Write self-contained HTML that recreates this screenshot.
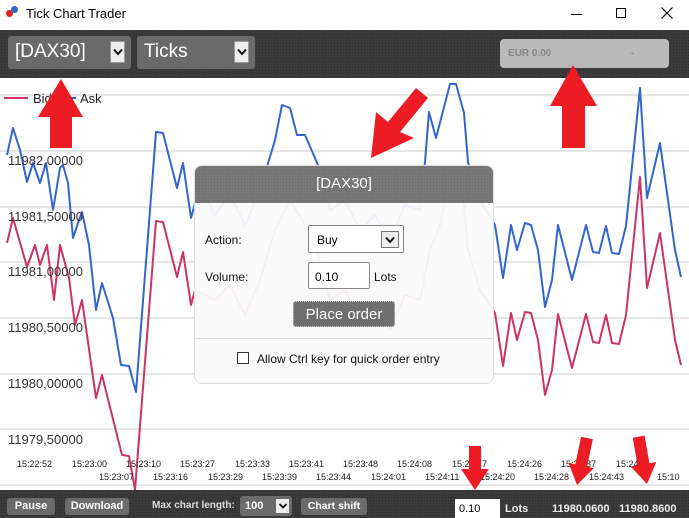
<!DOCTYPE html>
<html><head><meta charset="utf-8"><style>
*{margin:0;padding:0;box-sizing:border-box}
body{width:689px;height:518px;overflow:hidden;background:#fff;font-family:"Liberation Sans",sans-serif;position:relative}
.abs{position:absolute}
.dark{background:#3a3a3a;background-image:radial-gradient(#2c2c2c 35%,transparent 36%);background-size:3px 3px}
.sel{position:absolute;top:36px;height:33px;background:#6a6a6a;border-radius:3px;color:#fff;font-size:19px;padding:5px 7px}
.dd{position:absolute;top:5px;right:6px;width:15px;height:22px;background:#eee;border:1px solid #999}
.dd svg,.ddm svg{position:absolute;left:50%;top:50%;transform:translate(-50%,-50%)}
.btn{position:absolute;top:498px;height:17px;background:#6b6b6b;border-radius:3px;color:#fff;font-size:11px;font-weight:bold;padding:2px 0;text-align:center;white-space:nowrap}
.yl{position:absolute;left:8px;font-size:13px;color:#333}
.t{position:absolute;font-size:9px;color:#222}
</style></head><body>
<div class="abs" style="left:6px;top:10px;width:7px;height:7px;border-radius:50%;background:#d22"></div>
<div class="abs" style="left:11px;top:6px;width:7px;height:7px;border-radius:50%;background:#36c"></div>
<div class="abs" style="left:26px;top:6px;font-size:13px;color:#000">Tick Chart Trader</div>
<div class="abs" style="left:571px;top:14px;width:11px;height:1px;background:#000"></div>
<div class="abs" style="left:616px;top:8px;width:10px;height:10px;border:1px solid #000"></div>
<svg class="abs" style="left:661px;top:7px" width="12" height="12"><path d="M0.5 0.5L11.5 11.5M11.5 0.5L0.5 11.5" stroke="#000" stroke-width="1.2"/></svg>
<div class="abs dark" style="left:0;top:30px;width:689px;height:48px"></div>
<div class="sel" style="left:8px;width:123px">[DAX30]<div class="dd"><svg width="10" height="7"><path d="M1 1L5 5.5L9 1" fill="none" stroke="#111" stroke-width="2"/></svg></div></div>
<div class="sel" style="left:137px;width:118px">Ticks<div class="dd"><svg width="10" height="7"><path d="M1 1L5 5.5L9 1" fill="none" stroke="#111" stroke-width="2"/></svg></div></div>
<div class="abs" style="left:500px;top:39px;width:169px;height:29px;background:#b9b9b9;border-radius:4px;color:#888;font-size:10px;font-weight:bold;padding:9px 8px">EUR 0.00<span style="position:absolute;left:131px">-</span></div>
<svg class="abs" style="left:0;top:78px" width="689" height="412">
<g stroke="#ccc" stroke-width="1">
<line x1="0" y1="17" x2="689" y2="17"/><line x1="0" y1="73" x2="689" y2="73"/><line x1="0" y1="129" x2="689" y2="129"/><line x1="0" y1="184" x2="689" y2="184"/><line x1="0" y1="240" x2="689" y2="240"/><line x1="0" y1="296" x2="689" y2="296"/><line x1="0" y1="351" x2="689" y2="351"/><line x1="0" y1="407" x2="689" y2="407"/>
</g>
<g transform="translate(0,-78)" fill="none" stroke-width="2" stroke-linejoin="round">
<polyline stroke="#3366cc" points="7,155 13,128 20,150 27,182 33,163 40,183 46,163 53,210 60,168 63,165 68,183 73,238 79,220 82,212 89,245 96,310 102,283 113,318 121,365 129,366 136,392 156,132 163,133 177,188 183,163 191,218 200,185 215,215 230,195 245,225 260,190 275,140 282,105 290,108 297,135 305,135 318,165 330,210 345,200 360,230 375,215 390,240 405,205 420,210 425,162 429,112 436,138 450,84 456,84 464,113 468,162 480,200 495,225 503,278 511,225 517,250 525,223 531,225 538,250 545,307 552,280 558,225 572,280 586,225 593,252 599,253 606,226 612,253 619,254 626,226 640,88 647,198 660,143 675,250 681,277"/>
<polyline stroke="#cc3366" points="7,243 13,218 27,267 35,245 40,265 47,245 54,300 60,245 69,278 75,325 82,300 96,398 102,375 122,455 129,456 135,490 156,221 163,222 177,277 183,252 191,305 195,290 215,300 230,285 245,315 260,280 275,230 290,200 305,225 318,255 330,300 345,290 360,320 375,305 390,330 405,295 420,300 430,250 440,225 450,175 456,175 464,205 468,250 480,290 495,313 503,366 511,313 517,340 525,312 531,313 538,340 545,395 552,370 558,314 572,368 586,314 593,342 599,343 606,315 612,343 619,344 626,315 640,177 647,288 660,233 675,340 681,365"/>
</g>
<line x1="4" y1="20" x2="28" y2="20" stroke="#cc3366" stroke-width="2"/>
<line x1="54" y1="20" x2="76" y2="20" stroke="#3366cc" stroke-width="2"/>
<text x="33" y="25" font-size="13" fill="#222" font-family="Liberation Sans">Bid</text>
<text x="80" y="25" font-size="13" fill="#222" font-family="Liberation Sans">Ask</text>
</svg>
<div class="yl" style="top:153px">11982,00000</div>
<div class="yl" style="top:209px">11981,50000</div>
<div class="yl" style="top:264px">11981,00000</div>
<div class="yl" style="top:320px">11980,50000</div>
<div class="yl" style="top:376px">11980,00000</div>
<div class="yl" style="top:432px">11979,50000</div>
<div class="t" style="left:17px;top:459px">15:22:52</div>
<div class="t" style="left:72px;top:459px">15:23:00</div>
<div class="t" style="left:126px;top:459px">15:23:10</div>
<div class="t" style="left:180px;top:459px">15:23:27</div>
<div class="t" style="left:235px;top:459px">15:23:33</div>
<div class="t" style="left:289px;top:459px">15:23:41</div>
<div class="t" style="left:343px;top:459px">15:23:48</div>
<div class="t" style="left:397px;top:459px">15:24:08</div>
<div class="t" style="left:452px;top:459px">15:24:17</div>
<div class="t" style="left:507px;top:459px">15:24:26</div>
<div class="t" style="left:561px;top:459px">15:24:37</div>
<div class="t" style="left:616px;top:459px">15:24:</div>
<div class="t" style="left:99px;top:472px">15:23:07</div>
<div class="t" style="left:153px;top:472px">15:23:16</div>
<div class="t" style="left:208px;top:472px">15:23:29</div>
<div class="t" style="left:262px;top:472px">15:23:39</div>
<div class="t" style="left:316px;top:472px">15:23:44</div>
<div class="t" style="left:371px;top:472px">15:24:01</div>
<div class="t" style="left:425px;top:472px">15:24:11</div>
<div class="t" style="left:480px;top:472px">15:24:20</div>
<div class="t" style="left:534px;top:472px">15:24:28</div>
<div class="t" style="left:589px;top:472px">15:24:43</div>
<div class="t" style="left:657px;top:472px">15:10</div>
<div class="abs" style="left:194px;top:165px;width:300px;height:219px;background:rgba(250,250,250,0.94);border:1px solid #ddd;border-radius:8px;overflow:hidden">
<div class="dark" style="height:37px;background-color:#777;background-image:radial-gradient(#6a6a6a 35%,transparent 36%);color:#fff;font-size:15px;text-align:center;padding-top:9px">[DAX30]</div>
<div class="abs" style="left:10px;top:67px;font-size:12px;color:#111">Action:</div>
<div class="abs" style="left:113px;top:59px;width:96px;height:28px;background:#fff;border:1px solid #888;border-radius:2px;font-size:12px;padding:7px 8px">Buy<div class="abs ddm" style="right:4px;top:5px;width:18px;height:17px;background:#eee;border:1px solid #777"><svg width="10" height="7"><path d="M1 1L5 5.5L9 1" fill="none" stroke="#111" stroke-width="2"/></svg></div></div>
<div class="abs" style="left:10px;top:104px;font-size:12px;color:#111">Volume:</div>
<div class="abs" style="left:113px;top:96px;width:62px;height:27px;background:#fff;border:1px solid #888;border-radius:2px;font-size:12px;padding:7px 6px">0.10</div>
<div class="abs" style="left:179px;top:104px;font-size:12px;color:#111">Lots</div>
<div class="abs" style="left:98px;top:135px;width:102px;height:26px;background:#6f6f6f;border:1px dotted #ccc;border-radius:3px;color:#fff;font-size:15px;text-align:center;padding-top:4px">Place order</div>
<div class="abs" style="left:0;top:172px;width:300px;height:1px;background:#ddd"></div>
<div class="abs" style="left:42px;top:186px;width:12px;height:12px;border:1px solid #333;background:#fff"></div>
<div class="abs" style="left:62px;top:186px;font-size:12px;color:#111">Allow Ctrl key for quick order entry</div>
</div>
<div class="abs dark" style="left:0;top:490px;width:689px;height:28px"></div>
<div class="btn" style="left:7px;width:48px">Pause</div>
<div class="btn" style="left:65px;width:64px">Download</div>
<div class="abs" style="left:152px;top:500px;font-size:10px;font-weight:bold;color:#ddd;white-space:nowrap">Max chart length:</div>
<div class="abs" style="left:240px;top:496px;width:52px;height:20px;background:#6b6b6b;border-radius:3px;color:#fff;font-size:11px;font-weight:bold;padding:4px 5px">100<div class="abs ddm" style="right:3px;top:3px;width:13px;height:14px;background:#eee"><svg width="9" height="6"><path d="M1 1L4.5 4.5L8 1" fill="none" stroke="#111" stroke-width="1.8"/></svg></div></div>
<div class="btn" style="left:301px;width:66px;font-size:10.5px">Chart shift</div>
<div class="abs" style="left:455px;top:499px;width:45px;height:19px;background:#fff;font-size:11px;padding:4px 4px">0.10</div>
<div class="abs" style="left:505px;top:503px;font-size:11px;font-weight:bold;color:#eee">Lots</div>
<div class="abs" style="left:552px;top:503px;font-size:11px;font-weight:bold;color:#eee">11980.0600</div>
<div class="abs" style="left:619px;top:503px;font-size:11px;font-weight:bold;color:#eee">11980.8600</div>
<svg class="abs" style="left:0;top:0" width="689" height="518">
<g fill="#ed1c24">
<polygon points="61,79 83,117 72,117 72,148 50,148 50,117 38,117"/>
<polygon points="573,65 597,106 585,106 585,148 562,148 562,106 550,106"/>
<polygon points="371,158 376,112 388,122 416,88 428,98 400,132 414,138"/>
<polygon points="475,490 489,469 481,469 481,446 469,446 469,469 461,469"/>
<g transform="translate(577,485) rotate(12)"><polygon points="0,0 13,-20 6,-20 6,-48 -6,-48 -6,-20 -13,-20"/></g>
<g transform="translate(647,484) rotate(-10)"><polygon points="0,0 13,-20 6,-20 6,-48 -6,-48 -6,-20 -13,-20"/></g>
</g>
</svg>
</body></html>
